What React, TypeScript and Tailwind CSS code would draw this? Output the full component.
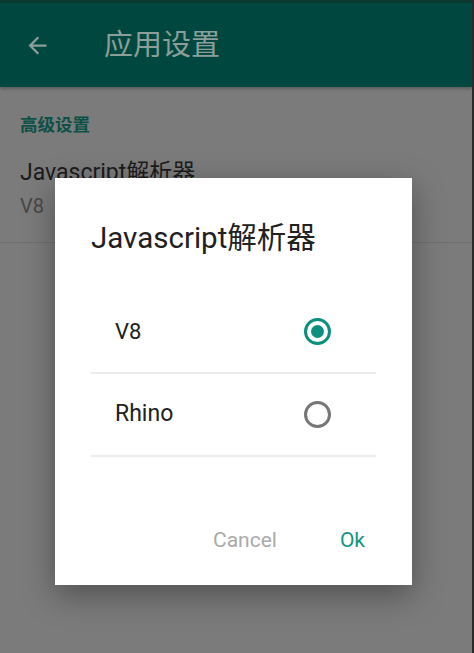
import React from "react";

const font = { fontFamily: 'Roboto, "Noto Sans CJK SC", sans-serif' };

export default function App() {
  return (
    <div
      className="relative w-[474px] h-[653px] overflow-hidden bg-[#7b7b7b] border-r-2 border-[#2a2a2a]"
      style={font}
    >
      {/* Toolbar */}
      <div className="border-t-[3px] border-[#0b3932] bg-[#00483f] h-[87px] flex items-center shadow-[0_2px_3px_rgba(0,0,0,0.25)]">
        <div className="w-[104px] pl-[24px] flex items-center">
          <svg width="27" height="27" viewBox="0 0 24 24" fill="none">
            <path
              d="M20 11H7.83l5.59-5.59L12 4l-8 8 8 8 1.41-1.41L7.83 13H20v-2z"
              fill="#8c9e99"
            />
          </svg>
        </div>
        <span className="text-[29px] leading-none text-[#8c9e99]">应用设置</span>
      </div>

      {/* Content */}
      <div className="px-[20px]">
        <div className="pt-[30px] text-[17.5px] font-bold text-[#0c5047] leading-none">高级设置</div>
        <div className="pt-[26px] text-[23px] text-[#1b1b1b] leading-none">Javascript解析器</div>
        <div className="pt-[12px] text-[20px] text-[#474747] leading-none">V8</div>
      </div>
      <div className="mt-[26px] h-px bg-[#707070]"></div>

      {/* Dialog */}
      <div className="absolute left-[55px] top-[178px] w-[357px] h-[407px] bg-white shadow-[0_10px_30px_rgba(0,0,0,0.35)] flex flex-col">
        <div className="pl-[36px] pt-[46px] text-[29.5px] leading-none text-[#212121]">Javascript解析器</div>
        <div className="mt-[37px] mx-[36px] flex flex-col">
          <div className="h-[83px] flex items-center justify-between pl-[24px] pr-[45px] border-b-2 border-[#ececec]">
            <span className="text-[22px] text-[#212121]">V8</span>
            <span className="w-[27px] h-[27px] rounded-full border-[3px] border-[#0c8f7d] flex items-center justify-center">
              <span className="w-[13px] h-[13px] rounded-full bg-[#0c8f7d]"></span>
            </span>
          </div>
          <div className="h-[83px] flex items-center justify-between pl-[24px] pr-[45px] border-b-2 border-[#ececec]">
            <span className="text-[23px] text-[#212121]">Rhino</span>
            <span className="w-[27px] h-[27px] rounded-full border-[3px] border-[#767676]"></span>
          </div>
        </div>
        <div className="mt-[73px] flex items-center justify-end pr-[47px] gap-[63px] text-[21px] leading-none">
          <span className="text-[#aaaaaa]">Cancel</span>
          <span className="text-[#129482]">Ok</span>
        </div>
      </div>
    </div>
  );
}
